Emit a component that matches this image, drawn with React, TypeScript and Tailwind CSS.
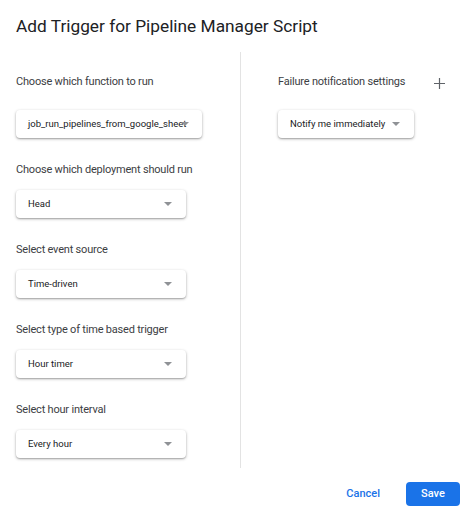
import React from "react";

type SelectBoxProps = {
  value: string;
  width: string;
  arrowRight?: string;
};

function Caret() {
  return (
    <svg width="8" height="4" viewBox="0 0 8 4" className="shrink-0">
      <path d="M0 0 L8 0 L4 4 Z" fill="#8f9296" />
    </svg>
  );
}

function SelectBox({ value, width, arrowRight = "right-[14px]" }: SelectBoxProps) {
  return (
    <div
      className={`relative flex h-[28px] items-center rounded-[4px] bg-white pl-[12px] shadow-[0_1px_3px_rgba(0,0,0,0.32),0_1px_1px_rgba(0,0,0,0.12)] ${width}`}
    >
      <span className="whitespace-nowrap text-[9.5px] text-[#202124]">{value}</span>
      <span className={`absolute top-[12px] ${arrowRight}`}>
        <Caret />
      </span>
    </div>
  );
}

const fields = [
  { label: "Choose which deployment should run", value: "Head" },
  { label: "Select event source", value: "Time-driven" },
  { label: "Select type of time based trigger", value: "Hour timer" },
  { label: "Select hour interval", value: "Every hour" },
];

export default function App() {
  return (
    <div
      className="h-[515px] w-[474px] bg-white text-[#3c4043]"
      style={{ fontFamily: "Roboto, 'Noto Sans', Arial, sans-serif" }}
    >
      <div className="px-[16px] pt-[14px] text-[17.3px] leading-[24px] text-[#202124]">
        Add Trigger for Pipeline Manager Script
      </div>

      <div className="mt-[14px] flex">
        <div className="w-[240px] pl-[16px] pt-[22px] pb-[10px]">
          <div className="text-[11px] leading-[16px] tracking-[-0.2px]">
            Choose which function to run
          </div>
          <div className="mt-[20px]">
            <SelectBox
              value="job_run_pipelines_from_google_sheet"
              width="w-[186px]"
              arrowRight="right-[13px]"
            />
          </div>
          {fields.map((f) => (
            <div key={f.label}>
              <div className="mt-[24px] text-[11px] leading-[16px] tracking-[-0.2px]">
                {f.label}
              </div>
              <div className="mt-[12px]">
                <SelectBox value={f.value} width="w-[170px]" />
              </div>
            </div>
          ))}
        </div>

        <div className="h-[416px] w-px bg-[#e3e3e3]" />

        <div className="flex-1 pl-[37px] pr-[29px] pt-[22px]">
          <div className="flex items-center justify-between">
            <span className="text-[11px] leading-[16px] tracking-[-0.2px]">
              Failure notification settings
            </span>
            <svg width="11" height="11" viewBox="0 0 11 11" className="mt-[2px]">
              <path d="M5.5 0 V11 M0 5.5 H11" stroke="#5f6368" strokeWidth="1.2" />
            </svg>
          </div>
          <div className="mt-[20px]">
            <SelectBox value="Notify me immediately" width="w-[136px]" arrowRight="right-[14px]" />
          </div>
        </div>
      </div>

      <div className="mt-[14px] flex items-center justify-end pr-[14px]">
        <button className="mr-[18px] px-[8px] text-[11px] font-medium text-[#1a73e8]">
          Cancel
        </button>
        <button className="h-[24px] w-[54px] rounded-[4px] bg-[#1a73e8] text-[11px] font-medium text-white">
          Save
        </button>
      </div>
    </div>
  );
}
